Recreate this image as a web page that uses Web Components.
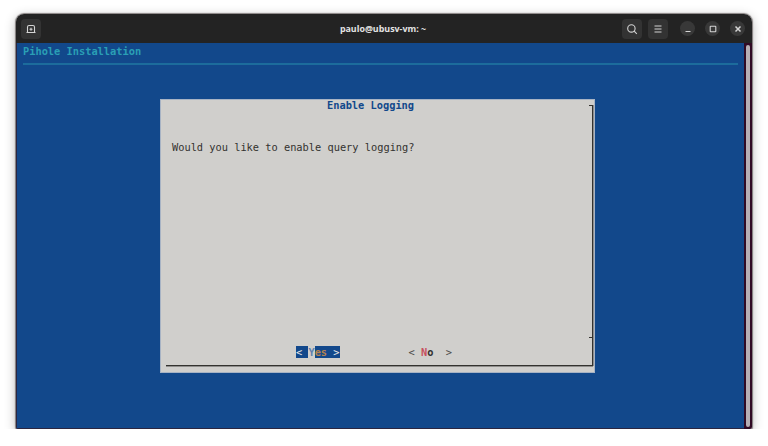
<!DOCTYPE html>
<html>
<head>
<meta charset="utf-8">
<title>paulo@ubusv-vm: ~</title>
<style>
  html, body { margin: 0; background: #fff; }
  body { padding: 14px 16px 0; font-family: "DejaVu Sans Mono", monospace; }
</style>
</head>
<body>
<term-window title="paulo@ubusv-vm: ~">
  <back-title>Pihole Installation</back-title>
  <wt-dialog heading="Enable Logging">
    Would you like to enable query logging?
    <wt-button slot="buttons" label="Yes" selected></wt-button>
    <wt-button slot="buttons" label="No"></wt-button>
  </wt-dialog>
</term-window>

<script>
class HeaderButton extends HTMLElement {
  connectedCallback() {
    this.attachShadow({ mode: 'open' });
    const round = this.hasAttribute('round');
    this.shadowRoot.innerHTML = `
      <style>
        :host {
          display: flex;
          align-items: center;
          justify-content: center;
          width: ${round ? 15 : 20}px;
          height: ${round ? 15 : 20}px;
          background: ${round ? '#383838' : '#333333'};
          border-radius: ${round ? '50%' : '4px'};
        }
        svg { display: block; width: 12px; height: 12px; fill: none; stroke: #d4d4d4; stroke-width: 1.1; }
      </style>
      <svg viewBox="0 0 12 12">${this.getAttribute('icon')}</svg>
    `;
  }
}
customElements.define('header-button', HeaderButton);

class TermWindow extends HTMLElement {
  connectedCallback() {
    this.attachShadow({ mode: 'open' });
    this.shadowRoot.innerHTML = `
      <style>
        :host {
          display: flex;
          flex-direction: column;
          width: 736px;
          height: 415px;
          border-radius: 8px 8px 2px 2px;
          overflow: hidden;
          box-shadow: 0 3px 12px rgba(0,0,0,0.3), 0 0 1px 1px rgba(60,50,50,0.55);
        }
        header {
          display: grid;
          grid-template-columns: 1fr auto 1fr;
          align-items: center;
          height: 29px;
          flex: none;
          padding: 0 7px 0 5px;
          background: #232323;
          color: #e4e4e4;
          font: bold 8.9px "Open Sans", "Noto Sans", sans-serif;
        }
        h1 { margin: 0; font: inherit; }
        .right { display: flex; justify-content: flex-end; align-items: center; }
        .tools { display: flex; gap: 6px; margin-right: 12px; }
        .controls { display: flex; gap: 10px; }
        main { flex: 1; display: flex; min-height: 0; }
        .screen {
          flex: 1;
          display: flex;
          flex-direction: column;
          background: #12488b;
          box-shadow: inset 1px 0 0 #2b2640, inset 0 -1px 0 #2b2640;
        }
        .scrollbar {
          flex: none;
          width: 8px;
          box-sizing: border-box;
          padding: 2px;
          background: #300a24;
        }
        .scrollbar div { height: 100%; background: #b6aeb4; border-radius: 2px; }
      </style>
      <header>
        <header-button icon='<path d="M2.5 9.5V4Q2.5 2.5 4 2.5h4Q9.5 2.5 9.5 4v5.5M1.5 9.5h9M6 4.8v3M4.5 6.3h3"/>'></header-button>
        <h1>${this.getAttribute('title')}</h1>
        <div class="right">
          <div class="tools">
            <header-button icon='<circle cx="5.4" cy="5.4" r="3.7"/><path d="M8.2 8.2l2.6 2.6"/>'></header-button>
            <header-button icon='<path d="M2.5 3h7M2.5 6h7M2.5 9h7"/>'></header-button>
          </div>
          <div class="controls">
            <header-button round icon='<path d="M3.5 8.5h5"/>'></header-button>
            <header-button round icon='<rect x="3.2" y="3.2" width="5.6" height="5.6" rx=".6"/>'></header-button>
            <header-button round icon='<path d="M3.5 3.5l5 5M8.5 3.5l-5 5" stroke-width="1.5"/>'></header-button>
          </div>
        </div>
      </header>
      <main>
        <div class="screen"><slot></slot></div>
        <div class="scrollbar"><div></div></div>
      </main>
    `;
  }
}
customElements.define('term-window', TermWindow);

class BackTitle extends HTMLElement {
  connectedCallback() {
    this.attachShadow({ mode: 'open' });
    this.shadowRoot.innerHTML = `
      <style>
        :host { display: block; margin: 0 6px 34px 7px; }
        div {
          height: 22px;
          padding-top: 1px;
          box-sizing: border-box;
          border-bottom: 2px solid;
          border-image: linear-gradient(#2a9fb5 50%, #1c6c9c 50%) 2;
          color: #2a9fb5;
          font: bold 10.33px/14px "DejaVu Sans Mono", monospace;
        }
      </style>
      <div><slot></slot></div>
    `;
  }
}
customElements.define('back-title', BackTitle);

class WtDialog extends HTMLElement {
  connectedCallback() {
    this.attachShadow({ mode: 'open' });
    this.shadowRoot.innerHTML = `
      <style>
        :host {
          display: block;
          align-self: flex-start;
          margin-left: 144px;
          width: 435px;
          height: 274px;
          box-sizing: border-box;
          padding: 6px 2px 7px 6px;
          background: #d0cfcc;
          box-shadow: inset 0 0 0 1px #a7b3c4;
        }
        .frame {
          position: relative;
          display: flex;
          flex-direction: column;
          height: 100%;
          box-sizing: border-box;
          border-right: 1px solid #33322f;
          border-bottom: 1px solid #33322f;
          box-shadow: 1px 0 0 #8f8e8c, 0 1px 0 #8f8e8c;
          padding: 0 0 0 6px;
        }
        /* the line-drawing corner and the scroll tick of the whiptail box */
        .frame::before, .frame::after {
          content: "";
          position: absolute;
          right: 0;
          width: 3px;
          height: 1px;
          background: #33322f;
        }
        .frame::before { top: 0; }
        .frame::after { bottom: 27px; }
        h2 {
          margin: -6px 0 0;
          padding-left: 155px;
          height: 42px;
          color: #12488b;
          font: bold 10.33px/13px "DejaVu Sans Mono", monospace;
        }
        p {
          flex: 1;
          margin: 0;
          color: #33322f;
          font: 10.33px/13px "DejaVu Sans Mono", monospace;
        }
        .buttons {
          display: flex;
          gap: 69px;
          padding: 0 0 6px 124px;
        }
      </style>
      <div class="frame">
        <h2>${this.getAttribute('heading')}</h2>
        <p><slot></slot></p>
        <div class="buttons"><slot name="buttons"></slot></div>
      </div>
    `;
  }
}
customElements.define('wt-dialog', WtDialog);

class WtButton extends HTMLElement {
  connectedCallback() {
    this.attachShadow({ mode: 'open' });
    const label = this.getAttribute('label');
    const on = this.hasAttribute('selected');
    const first = label[0];
    const rest = label.slice(1);
    // whiptail pads the labels to the same width, and only the first letter is the hotkey
    this.shadowRoot.innerHTML = `
      <style>
        :host {
          display: block;
          color: #33322f;
          font: bold 10.33px/14px "DejaVu Sans Mono", monospace;
        }
        div { white-space: pre; }
        .on { background: #12488b; color: #e8e8e8; }
        .key { color: ${on ? '#5b7fae' : '#c7505f'}; }
        .rest { color: ${on ? '#b5824f' : '#33322f'}; }
        .arrow { font-weight: normal; color: ${on ? '#e8e8e8' : '#4a4a48'}; }
      </style>
      <div><span class="${on ? 'on' : ''}"><span class="arrow">&lt;</span> </span><span class="key">${first}</span><span class="${on ? 'on' : ''}"><span class="rest">${rest}</span>${on ? ' ' : '  '}<span class="arrow">&gt;</span></span></div>
    `;
  }
}
customElements.define('wt-button', WtButton);
</script>
</body>
</html>
